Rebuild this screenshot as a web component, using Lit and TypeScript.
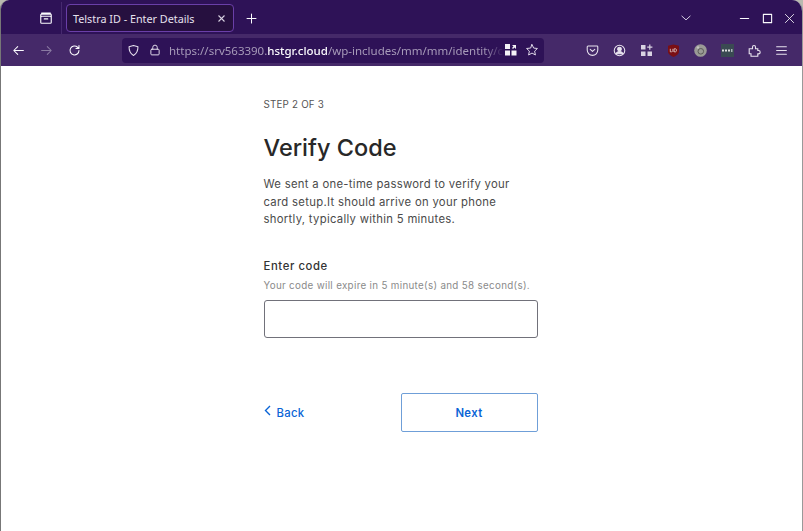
import { LitElement, html, css, svg } from "lit";
import { customElement } from "lit/decorators.js";

const ic = (w: number, content: unknown) => html`<svg class="ic" width=${w} height=${w} viewBox="0 0 16 16" fill="none" stroke="currentColor" stroke-width="1.3" stroke-linecap="round" stroke-linejoin="round">${content}</svg>`;

@customElement("app-root")
export class AppRoot extends LitElement {
  static styles = css`
    :host { display: block; width: 803px; height: 531px; overflow: hidden; background: #b9b9b0; font-family: "Noto Sans", "Liberation Sans", sans-serif; }
    .win { width: 803px; height: 531px; background: #fff; border-radius: 9px 11px 0 0; overflow: hidden; display: flex; flex-direction: column; box-sizing: border-box; border-left: 1px solid #777; border-right: 1px solid #999; }
    .tabs { height: 34px; flex: none; background: #2e1257; display: flex; align-items: center; color: #fbfbfe; box-sizing: border-box; padding-top: 2px; }
    .tabside { width: 61px; height: 32px; flex: none; display: flex; align-items: center; justify-content: flex-end; box-sizing: border-box; border-right: 1px solid #46296f; margin-right: 4px; }
    .tabside .ic { margin-right: 8px; }
    .tab { width: 168px; height: 28px; box-sizing: border-box; border: 1px solid #6a3fa8; border-radius: 4px; background: #26103f; display: flex; align-items: center; padding: 0 7px 0 6px; font-size: 10.8px; color: #e6e1ee; justify-content: space-between; white-space: nowrap; }
    .tab .x { width: 9px; height: 9px; color: #d6d0e0; }
    .plus { margin-left: 11px; }
    .spacer { flex: 1; }
    .chev { margin-right: 47px; color: #d8d2e4; }
    .wc { display: flex; align-items: center; gap: 11.5px; margin-right: 7px; }
    .nav { height: 32px; flex: none; background: #452969; display: flex; align-items: center; color: #fbfbfe; box-sizing: border-box; padding-left: 11px; }
    .nav .navb { margin-right: 15px; }
    .nav .dim { color: #8a7aa2; }
    .url { width: 422px; height: 25px; margin-left: 26px; background: #2e1257; border-radius: 4px; display: flex; align-items: center; padding: 0 5px; box-sizing: border-box; font-size: 11.5px; color: #a79bb9; white-space: nowrap; flex: none; }
    .url .ic { flex: none; color: #e4deec; }
    .url .lock { margin: 0 8px 0 9px; }
    .urltext { width: 335px; overflow: hidden; flex: none; -webkit-mask-image: linear-gradient(to right, #000 94%, transparent 100%); mask-image: linear-gradient(to right, #000 94%, transparent 100%); }
    .urltext b { font-weight: 500; color: #fbfbfe; }
    .qr { margin: 0 8px 0 1px; }
    .tools { display: flex; align-items: center; margin-left: 42px; gap: 14px; color: #e8e3ee; }
    .page { flex: 1; background: #fff; display: flex; justify-content: center; }
    .col { width: 274px; padding-top: 33px; box-sizing: border-box; position: relative; left: -1px; font-family: "Inter", sans-serif; }
    .step { font-size: 9.8px; color: #555; line-height: 12px; letter-spacing: .2px; }
    h1 { margin: 22px 0 0; font-size: 23.5px; line-height: 30px; font-weight: 500; color: #282828; }
    .lead { margin: 13px 0 0; font-size: 11.3px; line-height: 17.5px; color: #4a4a4a; letter-spacing: .3px; }
    .label { margin-top: 30px; font-size: 11.3px; font-weight: 500; line-height: 14px; color: #333; letter-spacing: .6px; }
    .hint { margin-top: 6px; font-size: 9.8px; line-height: 13px; color: #8a8a8a; letter-spacing: .32px; }
    .input { display: block; width: 274px; height: 38px; margin-top: 8px; box-sizing: border-box; border: 1px solid #71717a; border-radius: 3px; background: #fff; }
    .actions { display: flex; justify-content: space-between; align-items: center; margin-top: 55px; }
    .back { display: flex; align-items: center; gap: 6px; color: #0a64d6; font-size: 11.3px; font-weight: 500; letter-spacing: .3px; }
    .back span { padding-top: 2px; }
    .back svg { margin-top: -3px; }
    .next { width: 137px; height: 39px; box-sizing: border-box; border: 1px solid #6f9fd8; border-radius: 2px; background: #fff; color: #0a64d6; display: flex; align-items: center; justify-content: center; font-size: 11.3px; font-weight: 600; letter-spacing: .4px; font-family: inherit; padding: 2px 0 0; }
    .ic { display: block; flex: none; }
  `;
  render() {
    return html`<div class="win">
      <div class="tabs">
        <div class="tabside">${ic(14, svg`<rect x="2" y="6" width="12" height="8" rx="1"/><path d="M3 2.500h10M2 6V4.500a1 1 0 0 1 1-1h10a1 1 0 0 1 1 1V6M6 9h4"/>`)}</div>
        <div class="tab"><span>Telstra ID - Enter Details</span><svg class="x" viewBox="0 0 9 9" stroke="currentColor" stroke-width="1.1"><path d="M1.500 1.500l6 6M7.500 1.500l-6 6"/></svg></div>
        <div class="plus">${ic(13, svg`<path d="M8 2.500v11M2.500 8h11"/>`)}</div>
        <div class="spacer"></div>
        <div class="chev">${ic(12, svg`<path d="M2.500 5.500L8 10.500l5.500-5"/>`)}</div>
        <div class="wc">
          ${ic(11, svg`<path d="M2 8h12" stroke-width="1.6"/>`)}
          ${ic(11, svg`<rect x="2" y="2" width="12" height="12" stroke-width="1.6"/>`)}
          ${ic(11, svg`<path d="M2 2l12 12M14 2L2 14" stroke-width="1.2"/>`)}
        </div>
      </div>
      <div class="nav">
        <div class="navb">${ic(13, svg`<path d="M14 8H2.500M7 3.200L2.200 8 7 12.800"/>`)}</div>
        <div class="navb dim">${ic(13, svg`<path d="M2 8h11.500M9 3.200L13.800 8 9 12.800"/>`)}</div>
        <div class="navb">${ic(13, svg`<path d="M13.500 8a5.500 5.500 0 1 1-1.700-4L13.500 5.500M13.500 1.800v3.700H9.800"/>`)}</div>
        <div class="url">
          ${ic(13, svg`<path d="M8 1.800l5.500 1.700c0 5-1.500 8.500-5.500 10.700C4 12 2.500 8.500 2.500 3.500z"/>`)}
          <div class="lock">${ic(12, svg`<rect x="2.500" y="7" width="11" height="7.500" rx="1.200"/><path d="M5 7V4.500a3 3 0 0 1 6 0V7"/>`)}</div>
          <div class="urltext">https://srv563390.<b>hstgr.cloud</b>/wp-includes/mm/mm/identity/c</div>
          <div class="qr"><svg class="ic" width="12" height="12" viewBox="0 0 12 12" fill="#f4f2f7"><rect x="0" y="0" width="5" height="5"/><rect x="0" y="6.500" width="5" height="5"/><rect x="6.500" y="6.500" width="5" height="5"/><path d="M7 1h4v4l-1.500-1.500L8 5 7 4l1.500-1.500z"/></svg></div>
          ${ic(14, svg`<path d="M8 1.800l1.900 4 4.300.5-3.200 3 .9 4.400L8 11.500l-3.900 2.200.9-4.400-3.200-3 4.300-.5z" stroke-width="1.100"/>`)}
        </div>
        <div class="tools">
          ${ic(13, svg`<path d="M2.500 2.500h11a1 1 0 0 1 1 1v4a6.500 6.500 0 0 1-13 0v-4a1 1 0 0 1 1-1z"/><path d="M5.200 6.500L8 9.200l2.800-2.700"/>`)}
          ${ic(13, svg`<circle cx="8" cy="8" r="6.500"/><circle cx="8" cy="6.300" r="2.300" fill="currentColor"/><path d="M4 12c.5-2 2-2.700 4-2.700s3.500.7 4 2.700z" fill="currentColor"/>`)}
          <svg class="ic" width="13" height="13" viewBox="0 0 13 13" fill="#d9d3e2"><rect x="1" y="1" width="4.500" height="4.500"/><rect x="1" y="7.500" width="4.500" height="4.500"/><rect x="7.500" y="7.500" width="4.500" height="4.500"/><path d="M9.200 .5h1.200v2h2v1.200h-2v2H9.200v-2h-2V2.500h2z"/></svg>
          <svg class="ic" width="13" height="13" viewBox="0 0 13 13"><path d="M1 1.800L6.500 .4 12 1.800v5.700c0 2.600-2.700 4.200-5.500 5.500C3.700 11.700 1 10.100 1 7.500z" fill="#7a0f14"/><path d="M3.300 4.800v3h1.500M5.900 4.800v3.200M7.100 4.800h1.600c1 0 1 3 0 3H7.100z" stroke="#e8d5d5" stroke-width=".8" fill="none"/></svg>
          <svg class="ic" width="13" height="13" viewBox="0 0 13 13"><circle cx="6.500" cy="6.500" r="6.300" fill="#9a9a96"/><circle cx="6.800" cy="7.300" r="2.800" fill="none" stroke="#5c5c58" stroke-width="1"/><circle cx="4" cy="3.500" r="1.200" fill="#c4c4c0"/></svg>
          <svg class="ic" width="13" height="13" viewBox="0 0 13 13"><rect x="0" y="0" width="13" height="13" fill="#3a4a52"/><rect x="1" y="5.500" width="2" height="2" fill="#e0e0e0"/><rect x="4" y="5.500" width="2" height="2" fill="#e0e0e0"/><rect x="7" y="5.500" width="2" height="2" fill="#e0e0e0"/><rect x="10" y="5" width="1.500" height="3" fill="#aab4b8"/></svg>
          <svg class="ic" width="13" height="13" viewBox="0 0 13 13" fill="none" stroke="currentColor" stroke-width="1.100" stroke-linejoin="miter"><path d="M3 12.300V9.800H1.200V4.800H4.500V3a1.500 1.500 0 0 1 3 0V4.800H9.800V6.500H10.500a1.700 1.700 0 0 1 0 3.400H9.800V12.300z"/></svg>
          ${ic(13, svg`<path d="M2 3.500h12M2 8h12M2 12.500h12"/>`)}
        </div>
      </div>
      <div class="page">
        <div class="col">
          <div class="step">STEP 2 OF 3</div>
          <h1>Verify Code</h1>
          <p class="lead">We sent a one-time password to verify your<br>card setup.It should arrive on your phone<br>shortly, typically within 5 minutes.</p>
          <div class="label">Enter code</div>
          <div class="hint">Your code will expire in 5 minute(s) and 58 second(s).</div>
          <input class="input" />
          <div class="actions">
            <div class="back"><svg class="ic" width="7" height="11" viewBox="0 0 7 11" fill="none" stroke="currentColor" stroke-width="1.400"><path d="M6 1L1.500 5.500 6 10"/></svg><span>Back</span></div>
            <button class="next">Next</button>
          </div>
        </div>
      </div>
    </div>`;
  }
}
